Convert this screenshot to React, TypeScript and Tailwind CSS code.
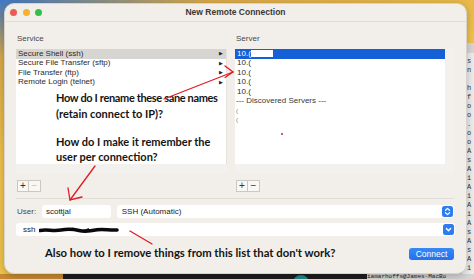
import React from 'react';

const services = [
  'Secure Shell (ssh)',
  'Secure File Transfer (sftp)',
  'File Transfer (ftp)',
  'Remote Login (telnet)',
];

const termChars = ['s', 'n', '', 'h', 'f', 'o', 'o', '.', 'o', 'o', 'A', 's', 'A', 'i', 'A', 'i', 'A', 'i', 'A', 's', 'A', 's', 'A', 'i'];

function PlusMinus({ minusDisabled }: { minusDisabled?: boolean }) {
  return (
    <div className="flex h-[12px]">
      <div className="w-[12px] h-[12px] flex items-center justify-center border border-[#cbc8c3] bg-[#f8f7f4] text-[#333] text-[10px] leading-none">
        +
      </div>
      <div
        className={
          'w-[12px] h-[12px] flex items-center justify-center border border-l-0 border-[#cbc8c3] bg-[#f8f7f4] text-[10px] leading-none ' +
          (minusDisabled ? 'text-[#c4c2be]' : 'text-[#333]')
        }
      >
        −
      </div>
    </div>
  );
}

function BlueIcon({ updown }: { updown?: boolean }) {
  return (
    <div className="w-[11px] h-[11px] rounded-[2.5px] bg-[#2d7cf1] flex items-center justify-center">
      {updown ? (
        <svg width="7" height="9" viewBox="0 0 7 9" fill="none" stroke="white" strokeWidth="1.3" strokeLinecap="round" strokeLinejoin="round">
          <path d="M1.5 3.3 L3.5 1.4 L5.5 3.3" />
          <path d="M1.5 5.7 L3.5 7.6 L5.5 5.7" />
        </svg>
      ) : (
        <svg width="7" height="7" viewBox="0 0 7 7" fill="none" stroke="white" strokeWidth="1.4" strokeLinecap="round" strokeLinejoin="round">
          <path d="M1.4 2.6 L3.5 4.7 L5.6 2.6" />
        </svg>
      )}
    </div>
  );
}

export default function App() {
  return (
    <div
      className="relative w-[474px] h-[279px] overflow-hidden bg-[linear-gradient(165deg,#3f78c6_0%,#d9a949_14%,#f1c34b_40%,#f3c64c_100%)]"
      style={{ fontFamily: '"Liberation Sans", Arial, sans-serif' }}
    >
      {/* terminal window peeking out on the right */}
      <div className="absolute left-[462px] top-[43px] w-[20px] h-[232px] flex flex-col">
        <div className="h-[10px] bg-[#d8d8d8]" />
        <div className="flex-1 bg-[#eeeeee] pl-[5px] pt-[4px] font-['Liberation_Mono',monospace] text-[7px] leading-[9px] text-[#333]">
          {termChars.map((c, i) => (
            <div key={i} className="h-[9px]">
              {c}
            </div>
          ))}
        </div>
      </div>

      {/* dock strip at the bottom */}
      <div className="absolute left-0 right-0 top-[274px] h-[5px] flex">
        <div className="w-[63px] bg-[#c98a2e]" />
        <div className="flex-1 bg-[#1e1e1e] relative">
          <div className="absolute left-[230px] top-[1px] w-[16px] h-[16px] rounded-full bg-[#1b8b8d]" />
        </div>
        <div className="w-[107px] bg-[#d6d6d6] font-['Liberation_Mono',monospace] text-[6px] leading-[5px] text-[#222] overflow-hidden whitespace-nowrap">
          iamarhoffs@James-MacBo
        </div>
      </div>

      {/* dialog window */}
      <div className="absolute left-[4px] top-[3px] w-[463px] h-[271px] rounded-[10px] bg-[#f2efea] border border-[#d8d4cd] shadow-[0_2px_8px_rgba(0,0,0,0.25)] flex flex-col overflow-hidden">
        {/* title bar */}
        <div className="h-[18px] flex items-center border-b border-[#e0ddd7] relative">
          <div className="flex gap-[5.5px] pl-[5px]">
            <div className="w-[7px] h-[7px] rounded-full bg-[#ee5b55]" />
            <div className="w-[7px] h-[7px] rounded-full bg-[#f2b331]" />
            <div className="w-[7px] h-[7px] rounded-full bg-[#33c048]" />
          </div>
          <div className="absolute inset-0 flex items-center justify-center text-[8.5px] font-bold text-[#3a3835]">
            New Remote Connection
          </div>
        </div>

        <div className="flex flex-col pl-[11px] pr-[12px]">
          {/* columns */}
          <div className="flex gap-[8px] pt-[12px]">
            {/* service column */}
            <div className="w-[212px] flex flex-col">
              <div className="h-[10px] leading-[10px] text-[8px] text-[#4a4845] pl-[1px]">Service</div>
              <div className="mt-[5px] h-[124px] flex flex-col bg-[#f3f1ed]">
                <div className="h-[115px] bg-white border-r border-[#e6e3de] flex flex-col">
                  {services.map((s, i) => (
                    <div
                      key={s}
                      className={
                        'h-[9.5px] flex items-center justify-between pl-[2px] pr-[3px] text-[8px] leading-none text-[#2c2b29] ' +
                        (i === 0 ? 'bg-[#d7d5d1]' : '')
                      }
                    >
                      <span>{s}</span>
                      <span className="text-[5px] text-[#222]">▶</span>
                    </div>
                  ))}
                </div>
              </div>
              <div className="mt-[7px] pl-[1px]">
                <PlusMinus minusDisabled />
              </div>
            </div>

            {/* server column */}
            <div className="w-[220px] flex flex-col">
              <div className="h-[10px] leading-[10px] text-[8px] text-[#4a4845] pl-[1px]">Server</div>
              <div className="mt-[5px] h-[124px] flex bg-[#f3f1ed]">
                <div className="w-[210px] h-[115px] bg-white flex flex-col">
                  <div className="h-[9.5px] bg-[#1560d6] flex items-center pl-[2px] text-[8px] leading-none text-white">
                    <span>10.(</span>
                    <span className="ml-[0.5px] w-[22px] h-[7px] bg-white" />
                  </div>
                  {[0, 1, 2, 3].map((i) => (
                    <div key={i} className="h-[9.5px] flex items-center pl-[2px] text-[8px] leading-none text-[#2c2b29]">
                      <span>10.(</span>
                    </div>
                  ))}
                  <div className="h-[9.5px] flex items-center pl-[1px] text-[8px] leading-none text-[#3a3936]">
                    --- Discovered Servers ---
                  </div>
                  {[0, 1].map((i) => (
                    <div key={i} className="h-[9.5px] flex items-center pl-[1px] text-[6px] leading-none text-[#777]">
                      <span>(</span>
                    </div>
                  ))}
                </div>
              </div>
              <div className="mt-[7px] pl-[1px]">
                <PlusMinus />
              </div>
            </div>
          </div>

          <div className="mt-[6px] h-px bg-[#e0ddd7]" />

          {/* user row */}
          <div className="mt-[6px] h-[13px] flex items-center">
            <div className="w-[26px] pl-[1px] text-[8px] text-[#4a4845]">User:</div>
            <div className="w-[69px] h-[13px] bg-white rounded-[3px] flex items-center pl-[4px] text-[8px] text-[#222]">
              scottjal
            </div>
            <div className="ml-[6px] w-[338px] h-[13px] bg-white rounded-[3px] flex items-center justify-between pl-[5px] pr-[1px] text-[8px] text-[#222]">
              <span>SSH (Automatic)</span>
              <BlueIcon updown />
            </div>
          </div>

          {/* command row */}
          <div className="mt-[5px] w-[439px] h-[13px] bg-white rounded-[3px] flex items-center justify-between pl-[7px] pr-[1px] text-[8px] text-[#222]">
            <div className="flex items-center">
              <span>ssh</span>
              <svg width="80" height="8" viewBox="0 0 80 8" className="ml-[4px]">
                <path
                  d="M1 4.5 C8 3 14 5.5 22 4 S34 3 40 4.5 S52 5 58 3.8 S70 4.5 78 4"
                  stroke="#0a0a0a"
                  strokeWidth="3.6"
                  fill="none"
                  strokeLinecap="round"
                />
                <path d="M30 4 L34 2.5 M46 5 L50 3" stroke="#0a0a0a" strokeWidth="2" />
              </svg>
            </div>
            <BlueIcon />
          </div>

          {/* bottom row */}
          <div className="mt-[12px] h-[12px] flex justify-end">
            <div className="w-[45px] h-[12px] rounded-[3px] bg-[linear-gradient(#3a88f6,#2371ec)] flex items-center justify-center text-[8.5px] leading-none text-white">
              Connect
            </div>
          </div>
        </div>
      </div>

      {/* annotations over the screenshot */}
      <div
        className="absolute left-[56px] top-[90px] text-[11px] leading-[16px] font-bold text-[#141414] whitespace-nowrap"
        style={{ fontFamily: 'Lato, "Open Sans", sans-serif' }}
      >
        <div className="tracking-[-0.35px]">How do I rename these sane names</div>
        <div>(retain connect to IP)?</div>
      </div>
      <div
        className="absolute left-[56px] top-[134px] text-[11px] leading-[15px] font-bold text-[#141414] whitespace-nowrap"
        style={{ fontFamily: 'Lato, "Open Sans", sans-serif' }}
      >
        <div>How do I make it remember the</div>
        <div>user per connection?</div>
      </div>
      <div
        className="absolute left-[45px] top-[245px] text-[11.3px] leading-[16px] font-bold text-[#141414] whitespace-nowrap"
        style={{ fontFamily: 'Lato, "Open Sans", sans-serif' }}
      >
        Also how to I remove things from this list that don't work?
      </div>

      <svg className="absolute inset-0 pointer-events-none" width="474" height="279" viewBox="0 0 474 279" fill="none">
        <g stroke="#e01b24" strokeWidth="1.3" strokeLinecap="round">
          <path d="M164 99 L233 72" />
          <path d="M225 66 L233 72 L225 77.5" />
          <path d="M95 166 L70 200" />
          <path d="M68 188 L70 200 L82 197" />
          <path d="M130 231 L152 244" />
        </g>
        <circle cx="282" cy="134" r="1" fill="#c81e3a" />
      </svg>
    </div>
  );
}
